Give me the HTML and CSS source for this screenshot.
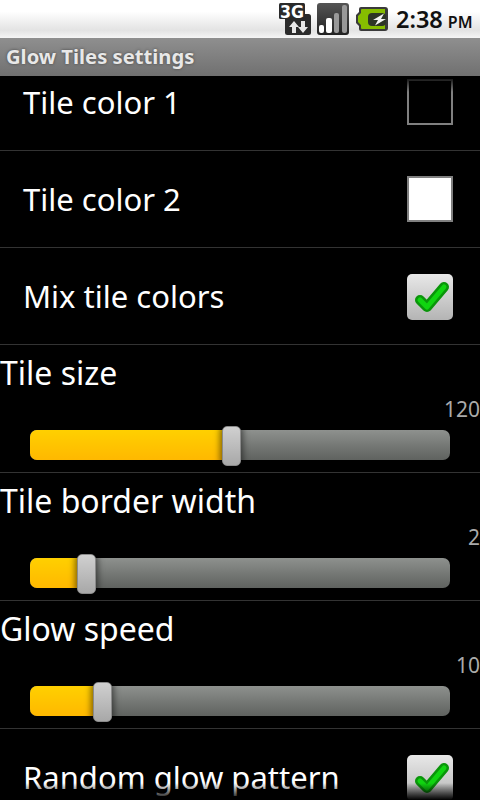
FILE: index.html
```html
<!DOCTYPE html>
<html lang="en">
<head>
<meta charset="utf-8">
<title>Glow Tiles settings</title>
<link rel="stylesheet" href="styles.css">
</head>
<body>
<div class="screen">
  <header class="status">
    <svg class="ico-3g" width="32" height="32" viewBox="0 0 32 32">
      <rect x="6" y="11" width="26" height="21" rx="2.5" fill="#2b2b2b"/>
      <rect x="0" y="0" width="26" height="16" rx="1.5" fill="#2a2a2a"/>
      <text x="1" y="14.5" class="g3" textLength="24" lengthAdjust="spacingAndGlyphs">3G</text>
      <path d="M15 18l5 6h-3v6h-4v-6h-3zM24 30l-5-6h3v-6h4v6h3z" fill="#e8e8e8"/>
    </svg>
    <svg class="ico-sig" width="32" height="32" viewBox="0 0 32 32">
      <defs><linearGradient id="sg" x1="0" y1="0" x2="0" y2="1"><stop offset="0" stop-color="#555"/><stop offset="1" stop-color="#222"/></linearGradient></defs>
      <rect x="0" y="0" width="32" height="32" rx="3" fill="url(#sg)"/>
      <rect x="2" y="22" width="5" height="8" rx="2" fill="#fff"/>
      <rect x="9" y="15" width="6" height="15" rx="2" fill="#fff"/>
      <rect x="17" y="10" width="5" height="20" rx="2" fill="#999"/>
      <rect x="25" y="2" width="5" height="28" rx="2" fill="#999"/>
    </svg>
    <svg class="ico-bat" width="32" height="24" viewBox="0 0 32 24">
      <path d="M5 0h24a3 3 0 0 1 3 3v18a3 3 0 0 1-3 3H5a2 2 0 0 1-2-2v-3l-3-3V8l3-3V2a2 2 0 0 1 2-2z" fill="#3a3a3a"/>
      <path d="M6 2h23v20H6q-1 0-1-1v-3l-3-3V9l3-3V3q0-1 1-1z" fill="#86bd00"/>
      <rect x="12" y="6" width="18" height="13" rx="4" fill="#2e3626"/>
      <path d="M28 6.500l-11 6.500h5l-3 5.500 11-6.500h-5z" fill="#f4f4f4"/>
    </svg>
    <div class="clock">2:38<span class="ampm">PM</span></div>
  </header>
  <div class="titlebar">Glow Tiles settings</div>
  <main class="viewport">
    <div class="list">
      <div class="row">
        <span class="row-title">Tile color 1</span>
        <span class="swatch swatch-black"></span>
      </div>
      <div class="row">
        <span class="row-title">Tile color 2</span>
        <span class="swatch swatch-white"></span>
      </div>
      <div class="row">
        <span class="row-title">Mix tile colors</span>
        <span class="check"><svg width="46" height="46" viewBox="0 0 46 46"><path class="tick-o" d="M13 26l7 7L37 13"/><path class="tick-i" d="M13 26l7 7L37 13"/></svg></span>
      </div>
      <section class="slider">
        <div class="slider-title">Tile size</div>
        <div class="slider-value">120</div>
        <div class="track"><div class="fill" style="width:201px"><span class="thumb"></span></div></div>
      </section>
      <section class="slider">
        <div class="slider-title">Tile border width</div>
        <div class="slider-value">2</div>
        <div class="track"><div class="fill" style="width:56px"><span class="thumb"></span></div></div>
      </section>
      <section class="slider">
        <div class="slider-title">Glow speed</div>
        <div class="slider-value">10</div>
        <div class="track"><div class="fill" style="width:72px"><span class="thumb"></span></div></div>
      </section>
      <div class="row">
        <span class="row-title">Random glow pattern</span>
        <span class="check"><svg width="46" height="46" viewBox="0 0 46 46"><path class="tick-o" d="M13 26l7 7L37 13"/><path class="tick-i" d="M13 26l7 7L37 13"/></svg></span>
      </div>
    </div>
    <div class="fade-top"></div>
    <div class="fade-bottom"></div>
  </main>
</div>
</body>
</html>
```
FILE: styles.css
```css
* { box-sizing: border-box; }
html, body { margin: 0; padding: 0; background: #000; }
body { font-family: "Noto Sans", "Open Sans", sans-serif; color: #fff; }
.screen { width: 480px; height: 800px; overflow: hidden; display: flex; flex-direction: column; }

.status {
  height: 38px; flex: none; display: flex; align-items: flex-start; padding: 3px 0 0 279px;
  background: linear-gradient(#fff 0, #fff 30%, #e3e3e3 80%, #f5f5f5 100%);
}
.ico-3g { flex: none; margin-right: 6px; overflow: visible; }
.ico-sig { flex: none; margin-right: 7px; }
.ico-bat { flex: none; margin: 4px 8px 0 0; }
.g3 { font: bold 18px "DejaVu Sans", sans-serif; fill: #fff; }
.clock { font-weight: 600; font-size: 23.5px; line-height: 32px; color: #111; white-space: nowrap; }
.ampm { font-size: 16px; margin-left: 5px; }

.titlebar {
  height: 38px; flex: none; padding-left: 6px; font-size: 20.2px; font-weight: 700; line-height: 37px;
  color: #e8e8e8; text-shadow: 0 0 3px #444;
  background: linear-gradient(#8f8f8f, #707070);
}

.viewport { flex: 1; position: relative; overflow: hidden; background: #000; }
.list { margin-top: -22px; }

.row {
  height: 97px; display: flex; align-items: center; justify-content: space-between;
  padding: 0 27px 0 23px; border-bottom: 1px solid #333;
}
.row-title { font-size: 31px; line-height: 42px; white-space: nowrap; }

.swatch { width: 46px; height: 46px; border: 2px solid #808080; flex: none; }
.swatch-black { background: #000; }
.swatch-white { background: #fff; }

.check {
  width: 46px; height: 46px; flex: none; border-radius: 5px; display: block; margin-top: 2px;
  background: linear-gradient(#e8e8e8, #b4b4b4);
}
.check svg { display: block; }
.tick-o { fill: none; stroke: #0a950a; stroke-width: 10; stroke-linecap: round; stroke-linejoin: round; }
.tick-i { fill: none; stroke: #10d410; stroke-width: 5; stroke-linecap: round; stroke-linejoin: round; }

.slider { height: 128px; position: relative; padding: 6px 0 0 0; border-bottom: 1px solid #333; }
.slider-title { font-size: 32px; line-height: 44px; white-space: nowrap; }
.slider-value { text-align: right; font-size: 21px; line-height: 28px; color: #aaa; }
.track {
  margin: 7px 30px 0; height: 30px; border-radius: 7px;
  background: linear-gradient(#8e918e, #767976 50%, #5f625f);
}
.fill {
  height: 30px; position: relative; border-radius: 7px 0 0 7px;
  background: linear-gradient(#ffd000, #ffb800);
}
.thumb {
  position: absolute; right: -10px; top: -4px; width: 19px; height: 40px; border-radius: 5px;
  border: 1px solid #8a8a8a;
  background: linear-gradient(#d0d0d0, #a8a8a8);
  box-shadow: 0 0 6px 2px rgba(0,0,0,.5);
}

.fade-top { position: absolute; left: 0; right: 0; top: 0; height: 16px; background: linear-gradient(#000, rgba(0,0,0,0)); }
.fade-bottom { position: absolute; left: 0; right: 0; bottom: 0; height: 17px; background: linear-gradient(rgba(0,0,0,0), #000); }
```
